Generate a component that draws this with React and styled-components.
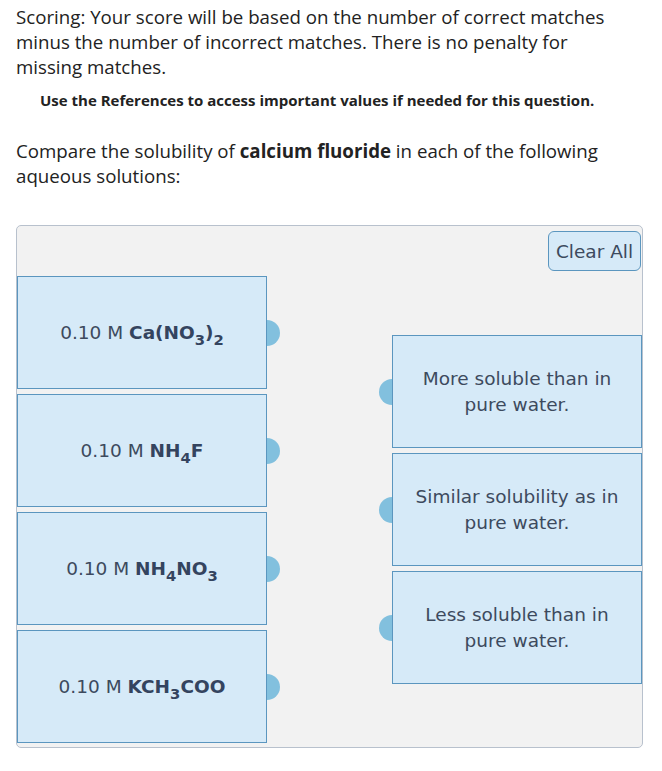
import React from 'react';
import styled, { createGlobalStyle } from 'styled-components';

const GlobalStyle = createGlobalStyle`
  html, body {
    margin: 0;
    padding: 0;
    background: #fff;
  }
  body {
    font-family: "Open Sans", "Liberation Sans", sans-serif;
    color: #222;
  }
`;

const boxFont = `'DejaVu Sans', Verdana, sans-serif`;

const Page = styled.div`
  padding: 4px 16px 0 16px;
`;

const Intro = styled.p`
  margin: 0;
  font-size: 18.7px;
  line-height: 25px;
  width: 615px;
`;

const Note = styled.p`
  margin: 11px 0 0 24px;
  font-size: 15px;
  font-weight: 700;
  line-height: 20px;
`;

const Question = styled.p`
  margin: 28px 0 0 0;
  font-size: 18.7px;
  line-height: 25px;
  width: 615px;

  & b {
    font-weight: 700;
  }
`;

const Board = styled.div`
  margin-top: 37px;
  width: 627px;
  box-sizing: border-box;
  background: #f2f2f2;
  border: 1px solid #b8c1cd;
  border-radius: 5px;
  display: flex;
  justify-content: space-between;
  padding-bottom: 4px;
`;

const Column = styled.div`
  display: flex;
  flex-direction: column;
  gap: 5px;
  padding-top: ${props => props.top}px;
`;

const RightColumn = styled.div`
  display: flex;
  flex-direction: column;
  align-items: flex-end;
`;

const ClearButton = styled.button`
  margin: 5px 1px 0 0;
  height: 40px;
  width: 93px;
  box-sizing: border-box;
  background: #d6eaf8;
  border: 1px solid #5b96bf;
  border-radius: 6px;
  font-family: ${boxFont};
  font-size: 18.5px;
  color: #3d4a5e;
  padding: 0;
  cursor: pointer;
`;

const Slot = styled.div`
  position: relative;
`;

const Dot = styled.span`
  position: absolute;
  top: 50%;
  ${props => (props.side === 'right' ? 'right: -13px;' : 'left: -13px;')}
  width: 26px;
  height: 26px;
  margin-top: -13px;
  border-radius: 50%;
  background: #82c0de;
`;

const Card = styled.div`
  position: relative;
  z-index: 1;
  width: 250px;
  height: 113px;
  box-sizing: border-box;
  background: #d6eaf8;
  border: 1px solid #5b96bf;
  display: flex;
  align-items: center;
  justify-content: center;
  text-align: center;
  padding: 0 12px;
  font-family: ${boxFont};
  font-size: 18.5px;
  line-height: 26px;
  color: #3d4a5e;

  & b {
    font-weight: 700;
    color: #34445f;
  }

  & sub {
    font-size: 80%;
    line-height: 0;
    vertical-align: -0.4em;
  }
`;

const RightCards = styled.div`
  display: flex;
  flex-direction: column;
  gap: 5px;
  margin-top: 64px;
`;

const solutions = [
  <>0.10 M <b>Ca(NO<sub>3</sub>)<sub>2</sub></b></>,
  <>0.10 M <b>NH<sub>4</sub>F</b></>,
  <>0.10 M <b>NH<sub>4</sub>NO<sub>3</sub></b></>,
  <>0.10 M <b>KCH<sub>3</sub>COO</b></>,
];

const answers = [
  'More soluble than in pure water.',
  'Similar solubility as in pure water.',
  'Less soluble than in pure water.',
];

export default function App() {
  return (
    <>
      <GlobalStyle />
      <Page>
        <Intro>
          Scoring: Your score will be based on the number of correct matches
          minus the number of incorrect matches. There is no penalty for
          missing matches.
        </Intro>
        <Note>Use the References to access important values if needed for this question.</Note>
        <Question>
          Compare the solubility of <b>calcium fluoride</b> in each of the following
          aqueous solutions:
        </Question>
        <Board>
          <Column top={50}>
            {solutions.map((s, i) => (
              <Slot key={i}>
                <Dot side="right" />
                <Card>
                  <span>{s}</span>
                </Card>
              </Slot>
            ))}
          </Column>
          <RightColumn>
            <ClearButton>Clear All</ClearButton>
            <RightCards>
              {answers.map((a, i) => (
                <Slot key={i}>
                  <Dot side="left" />
                  <Card>{a}</Card>
                </Slot>
              ))}
            </RightCards>
          </RightColumn>
        </Board>
      </Page>
    </>
  );
}
